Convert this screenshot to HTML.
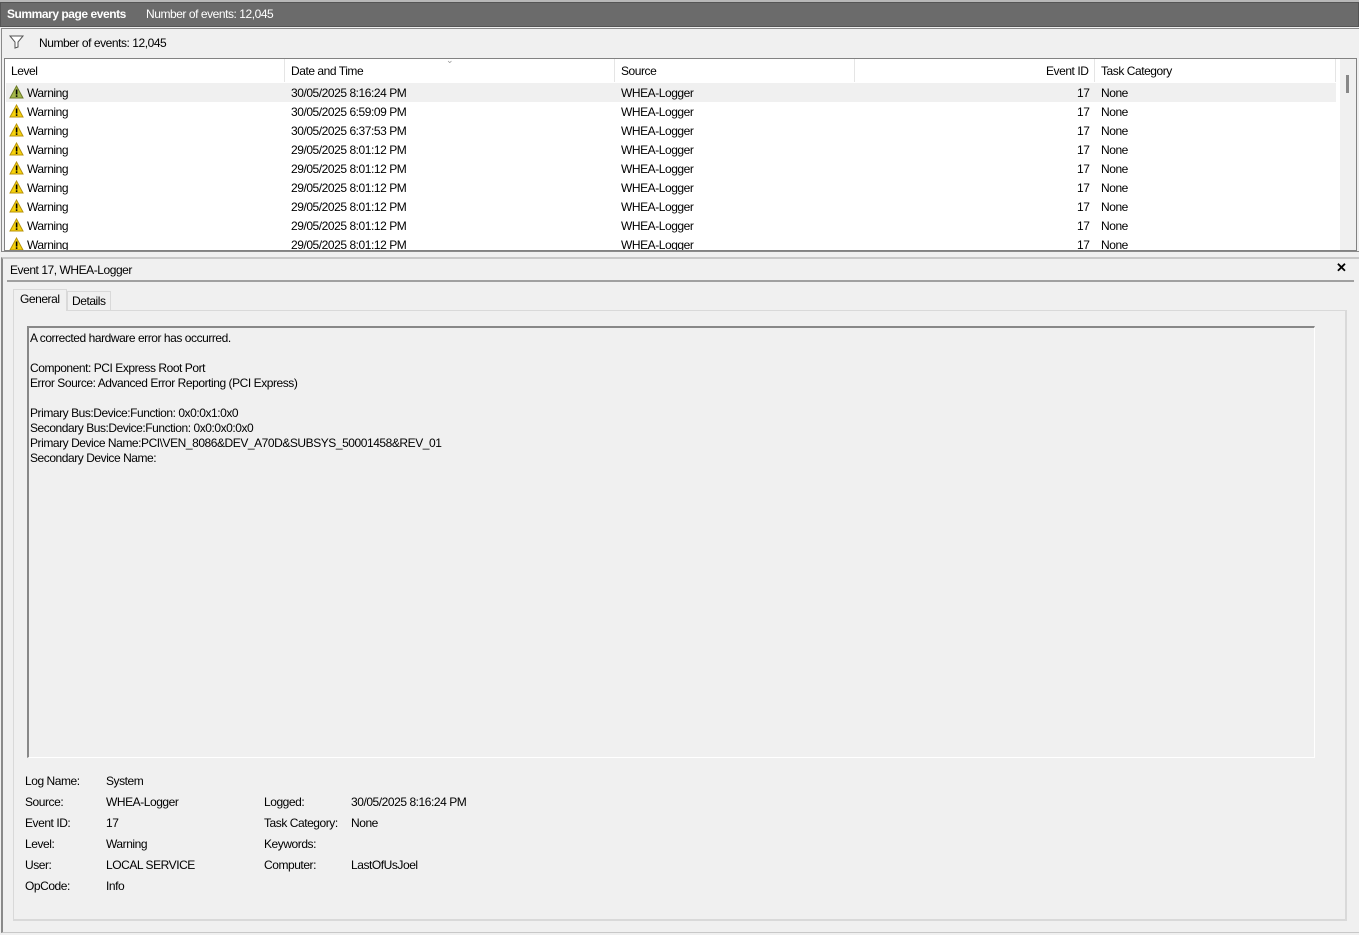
<!DOCTYPE html>
<html><head><meta charset="utf-8"><style>
*{margin:0;padding:0;box-sizing:border-box}
body{width:1359px;height:935px;background:#f0f0f0;font-family:"Liberation Sans",sans-serif;font-size:12px;letter-spacing:-0.45px;color:#000;position:relative;overflow:hidden}
.a{position:absolute;white-space:nowrap}
.row{position:absolute;left:6px;width:1330px;height:19px}
.row span{position:absolute;top:3px}
.warn{position:absolute;left:3px;top:2px}
</style></head><body>
<div class="a" style="left:0;top:0;width:1359px;height:2px;background:#b8b8b8"></div>
<div class="a" style="left:0;top:2px;width:1359px;height:25px;background:#6b6b6b;border:1px solid #555"></div>
<div class="a" style="left:7px;top:7px;color:#fff;font-weight:bold">Summary page events</div>
<div class="a" style="left:146px;top:7px;color:#fff">Number of events: 12,045</div>
<div class="a" style="left:1px;top:28px;width:1358px;height:224px;border:1px solid #8a8a8a;border-right:none"></div>
<svg class="a" style="left:9px;top:35px" width="16" height="14" viewBox="0 0 16 14"><path d="M1 1H14L9 7V12L6 13V7Z" fill="#fff" stroke="#555"/></svg>
<div class="a" style="left:39px;top:36px">Number of events: 12,045</div>
<div class="a" style="left:4px;top:58px;width:1353px;height:193px;background:#fff;border:1px solid #828282"></div>
<div class="a" style="left:1340px;top:59px;width:16px;height:191px;background:#f0f0f0"></div>
<div class="a" style="left:1346px;top:75px;width:3px;height:18px;background:#888"></div>
<div class="a" style="left:284px;top:59px;width:1px;height:23px;background:#e5e5e5"></div>
<div class="a" style="left:614px;top:59px;width:1px;height:23px;background:#e5e5e5"></div>
<div class="a" style="left:854px;top:59px;width:1px;height:23px;background:#e5e5e5"></div>
<div class="a" style="left:1094px;top:59px;width:1px;height:23px;background:#e5e5e5"></div>
<div class="a" style="left:1335px;top:59px;width:1px;height:23px;background:#e5e5e5"></div>
<div class="a" style="left:11px;top:64px">Level</div>
<div class="a" style="left:291px;top:64px">Date and Time</div>
<div class="a" style="left:446px;top:55px;color:#999;font-size:9px">&#8964;</div>
<div class="a" style="left:621px;top:64px">Source</div>
<div class="a" style="left:1046px;top:64px">Event ID</div>
<div class="a" style="left:1101px;top:64px">Task Category</div>
<div style="position:absolute;left:0;top:83px;width:1340px;height:167px;overflow:hidden">
<div class="row" style="top:0;background:#f0f0f0"><svg class="warn" width="15" height="14"><path d="M7.5 1L14 13H1Z" fill="#a4b84a" stroke="#6b7a2a"/><rect x="6.8" y="4.5" width="1.6" height="5" fill="#000"/><rect x="6.8" y="10.3" width="1.6" height="1.6" fill="#000"/></svg><span style="left:21px">Warning</span><span style="left:285px">30/05/2025 8:16:24 PM</span><span style="left:615px">WHEA-Logger</span><span style="left:1071px">17</span><span style="left:1095px">None</span></div>
<div class="row" style="top:19px"><svg class="warn" width="15" height="14"><path d="M7.5 1L14 13H1Z" fill="#f6d20c" stroke="#b8930a"/><rect x="6.8" y="4.5" width="1.6" height="5" fill="#000"/><rect x="6.8" y="10.3" width="1.6" height="1.6" fill="#000"/></svg><span style="left:21px">Warning</span><span style="left:285px">30/05/2025 6:59:09 PM</span><span style="left:615px">WHEA-Logger</span><span style="left:1071px">17</span><span style="left:1095px">None</span></div>
<div class="row" style="top:38px"><svg class="warn" width="15" height="14"><path d="M7.5 1L14 13H1Z" fill="#f6d20c" stroke="#b8930a"/><rect x="6.8" y="4.5" width="1.6" height="5" fill="#000"/><rect x="6.8" y="10.3" width="1.6" height="1.6" fill="#000"/></svg><span style="left:21px">Warning</span><span style="left:285px">30/05/2025 6:37:53 PM</span><span style="left:615px">WHEA-Logger</span><span style="left:1071px">17</span><span style="left:1095px">None</span></div>
<div class="row" style="top:57px"><svg class="warn" width="15" height="14"><path d="M7.5 1L14 13H1Z" fill="#f6d20c" stroke="#b8930a"/><rect x="6.8" y="4.5" width="1.6" height="5" fill="#000"/><rect x="6.8" y="10.3" width="1.6" height="1.6" fill="#000"/></svg><span style="left:21px">Warning</span><span style="left:285px">29/05/2025 8:01:12 PM</span><span style="left:615px">WHEA-Logger</span><span style="left:1071px">17</span><span style="left:1095px">None</span></div>
<div class="row" style="top:76px"><svg class="warn" width="15" height="14"><path d="M7.5 1L14 13H1Z" fill="#f6d20c" stroke="#b8930a"/><rect x="6.8" y="4.5" width="1.6" height="5" fill="#000"/><rect x="6.8" y="10.3" width="1.6" height="1.6" fill="#000"/></svg><span style="left:21px">Warning</span><span style="left:285px">29/05/2025 8:01:12 PM</span><span style="left:615px">WHEA-Logger</span><span style="left:1071px">17</span><span style="left:1095px">None</span></div>
<div class="row" style="top:95px"><svg class="warn" width="15" height="14"><path d="M7.5 1L14 13H1Z" fill="#f6d20c" stroke="#b8930a"/><rect x="6.8" y="4.5" width="1.6" height="5" fill="#000"/><rect x="6.8" y="10.3" width="1.6" height="1.6" fill="#000"/></svg><span style="left:21px">Warning</span><span style="left:285px">29/05/2025 8:01:12 PM</span><span style="left:615px">WHEA-Logger</span><span style="left:1071px">17</span><span style="left:1095px">None</span></div>
<div class="row" style="top:114px"><svg class="warn" width="15" height="14"><path d="M7.5 1L14 13H1Z" fill="#f6d20c" stroke="#b8930a"/><rect x="6.8" y="4.5" width="1.6" height="5" fill="#000"/><rect x="6.8" y="10.3" width="1.6" height="1.6" fill="#000"/></svg><span style="left:21px">Warning</span><span style="left:285px">29/05/2025 8:01:12 PM</span><span style="left:615px">WHEA-Logger</span><span style="left:1071px">17</span><span style="left:1095px">None</span></div>
<div class="row" style="top:133px"><svg class="warn" width="15" height="14"><path d="M7.5 1L14 13H1Z" fill="#f6d20c" stroke="#b8930a"/><rect x="6.8" y="4.5" width="1.6" height="5" fill="#000"/><rect x="6.8" y="10.3" width="1.6" height="1.6" fill="#000"/></svg><span style="left:21px">Warning</span><span style="left:285px">29/05/2025 8:01:12 PM</span><span style="left:615px">WHEA-Logger</span><span style="left:1071px">17</span><span style="left:1095px">None</span></div>
<div class="row" style="top:152px"><svg class="warn" width="15" height="14"><path d="M7.5 1L14 13H1Z" fill="#f6d20c" stroke="#b8930a"/><rect x="6.8" y="4.5" width="1.6" height="5" fill="#000"/><rect x="6.8" y="10.3" width="1.6" height="1.6" fill="#000"/></svg><span style="left:21px">Warning</span><span style="left:285px">29/05/2025 8:01:12 PM</span><span style="left:615px">WHEA-Logger</span><span style="left:1071px">17</span><span style="left:1095px">None</span></div>
</div>
<div class="a" style="left:1px;top:257px;width:1358px;height:676px;border-left:2px solid #8a8a8a;border-top:2px solid #c8c8c8;border-bottom:1px solid #c8c8c8"></div>
<div class="a" style="left:10px;top:263px">Event 17, WHEA-Logger</div>
<div class="a" style="left:1336px;top:260px;font-weight:bold;font-size:13px">✕</div>
<div class="a" style="left:7px;top:280px;width:1347px;height:2px;background:#a0a0a0"></div>
<div class="a" style="left:13px;top:289px;width:54px;height:22px;border:1px solid #d9d9d9;border-bottom:none;background:#f0f0f0;z-index:2"></div>
<div class="a" style="left:20px;top:292px;z-index:3">General</div>
<div class="a" style="left:67px;top:291px;width:44px;height:20px;border:1px solid #d9d9d9;border-bottom:none"></div>
<div class="a" style="left:72px;top:294px">Details</div>
<div class="a" style="left:13px;top:310px;width:1334px;height:611px;border:1px solid #d9d9d9;border-right:2px solid #d9d9d9;border-bottom:2px solid #d9d9d9"></div>
<div class="a" style="left:27px;top:326px;width:1288px;height:432px;border-top:2px solid #888;border-left:2px solid #888;border-right:1px solid #fff;border-bottom:1px solid #fff"></div>
<div class="a" style="left:30px;top:331px;line-height:15px;white-space:pre">A corrected hardware error has occurred.

Component: PCI Express Root Port
Error Source: Advanced Error Reporting (PCI Express)

Primary Bus:Device:Function: 0x0:0x1:0x0
Secondary Bus:Device:Function: 0x0:0x0:0x0
Primary Device Name:PCI\VEN_8086&amp;DEV_A70D&amp;SUBSYS_50001458&amp;REV_01
Secondary Device Name:</div>
<div class="a" style="left:25px;top:771px;line-height:21px">Log Name:<br>Source:<br>Event ID:<br>Level:<br>User:<br>OpCode:</div>
<div class="a" style="left:106px;top:771px;line-height:21px">System<br>WHEA-Logger<br>17<br>Warning<br>LOCAL SERVICE<br>Info</div>
<div class="a" style="left:264px;top:792px;line-height:21px">Logged:<br>Task Category:<br>Keywords:<br>Computer:</div>
<div class="a" style="left:351px;top:792px;line-height:21px">30/05/2025 8:16:24 PM<br>None<br><br>LastOfUsJoel</div>
</body></html>
